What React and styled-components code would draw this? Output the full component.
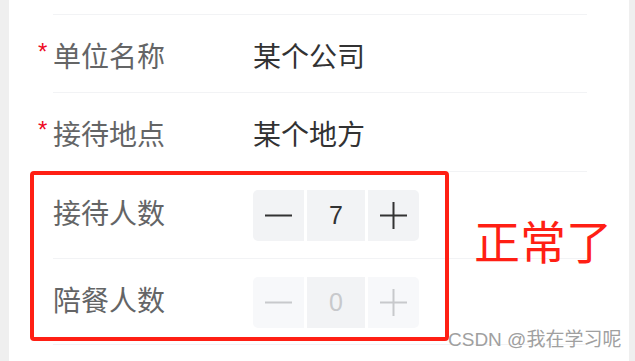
import React from 'react';
import styled, { createGlobalStyle } from 'styled-components';

const GlobalStyle = createGlobalStyle`
  html, body {
    margin: 0;
    padding: 0;
    background: #efefef;
  }
  body {
    font-family: "Noto Sans CJK SC", "Noto Sans", sans-serif;
  }
`;

const Page = styled.div`
  width: 635px;
  height: 361px;
  overflow: hidden;
  box-sizing: border-box;
  padding: 0 6px 0 9px;
  background: #efefef;
`;

const Card = styled.div`
  position: relative;
  height: 100%;
  background: #ffffff;
  display: flex;
  flex-direction: column;
`;

const Cell = styled.div`
  box-sizing: border-box;
  height: ${p => p.h}px;
  flex-shrink: 0;
  margin: 0 42px 0 44px;
  padding-top: ${p => (p.stub ? 0 : 18)}px;
  display: flex;
  align-items: flex-start;
  border-bottom: ${p => (p.last ? 'none' : '1px solid #f2f3f5')};
`;

const Label = styled.div`
  position: relative;
  width: 200px;
  flex-shrink: 0;
  font-size: 28px;
  line-height: 44px;
  color: #646566;
`;

const Required = styled.span`
  position: absolute;
  left: -15px;
  top: -3px;
  font-size: 24px;
  line-height: 44px;
  color: #ee0a24;
  font-family: "Liberation Sans", sans-serif;
`;

const Value = styled.div`
  font-size: 28px;
  line-height: 44px;
  color: #323233;
`;

const Stepper = styled.div`
  display: flex;
  gap: 3px;
`;

const StepButton = styled.div`
  width: 51px;
  height: 51px;
  display: flex;
  align-items: center;
  justify-content: center;
  background: ${p => (p.disabled ? '#f7f8fa' : '#f2f3f5')};
  color: ${p => (p.disabled ? '#c8c9cc' : '#323233')};
  border-radius: ${p => (p.side === 'left' ? '5px 0 0 5px' : '0 5px 5px 0')};
`;

const StepInput = styled.div`
  width: 58px;
  height: 51px;
  display: flex;
  align-items: center;
  justify-content: center;
  background: #f2f3f5;
  font-family: "Liberation Sans", Arial, sans-serif;
  font-size: 25px;
  color: ${p => (p.disabled ? '#c8c9cc' : '#323233')};
`;

const Annotation = styled.div`
  position: absolute;
  left: 21px;
  top: 171px;
  width: 419px;
  height: 170px;
  box-sizing: border-box;
  border: 4px solid #ff1f14;
  border-radius: 4px;
  pointer-events: none;
`;

const Note = styled.div`
  position: absolute;
  left: 465px;
  top: 216px;
  font-size: 46px;
  line-height: 1;
  color: #ff1f14;
`;

const Watermark = styled.div`
  position: absolute;
  left: 439px;
  top: 329px;
  font-size: 19px;
  line-height: 1.2;
  color: #a0a0a0;
  font-family: "Liberation Sans", "Noto Sans CJK SC", sans-serif;
`;

const Minus = () => (
  <svg width="27" height="27" viewBox="0 0 27 27">
    <rect x="0" y="12.5" width="27" height="2" fill="currentColor" />
  </svg>
);

const Plus = () => (
  <svg width="27" height="27" viewBox="0 0 27 27">
    <rect x="0" y="12.5" width="27" height="2" fill="currentColor" />
    <rect x="12.5" y="0" width="2" height="27" fill="currentColor" />
  </svg>
);

const NumberStepper = ({ value, disabled }) => (
  <Stepper>
    <StepButton side="left" disabled={disabled}><Minus /></StepButton>
    <StepInput disabled={disabled}>{value}</StepInput>
    <StepButton side="right" disabled={disabled}><Plus /></StepButton>
  </Stepper>
);

const App = () => (
  <Page>
    <GlobalStyle />
    <Card>
      <Cell h={15} stub />
      <Cell h={78}>
        <Label><Required>*</Required>单位名称</Label>
        <Value>某个公司</Value>
      </Cell>
      <Cell h={79}>
        <Label><Required>*</Required>接待地点</Label>
        <Value>某个地方</Value>
      </Cell>
      <Cell h={87}>
        <Label>接待人数</Label>
        <NumberStepper value={7} />
      </Cell>
      <Cell h={86}>
        <Label>陪餐人数</Label>
        <NumberStepper value={0} disabled />
      </Cell>
      <Cell h={40} last />

      <Annotation />
      <Note>正常了</Note>
      <Watermark>CSDN @我在学习呢</Watermark>
    </Card>
  </Page>
);

export default App;
